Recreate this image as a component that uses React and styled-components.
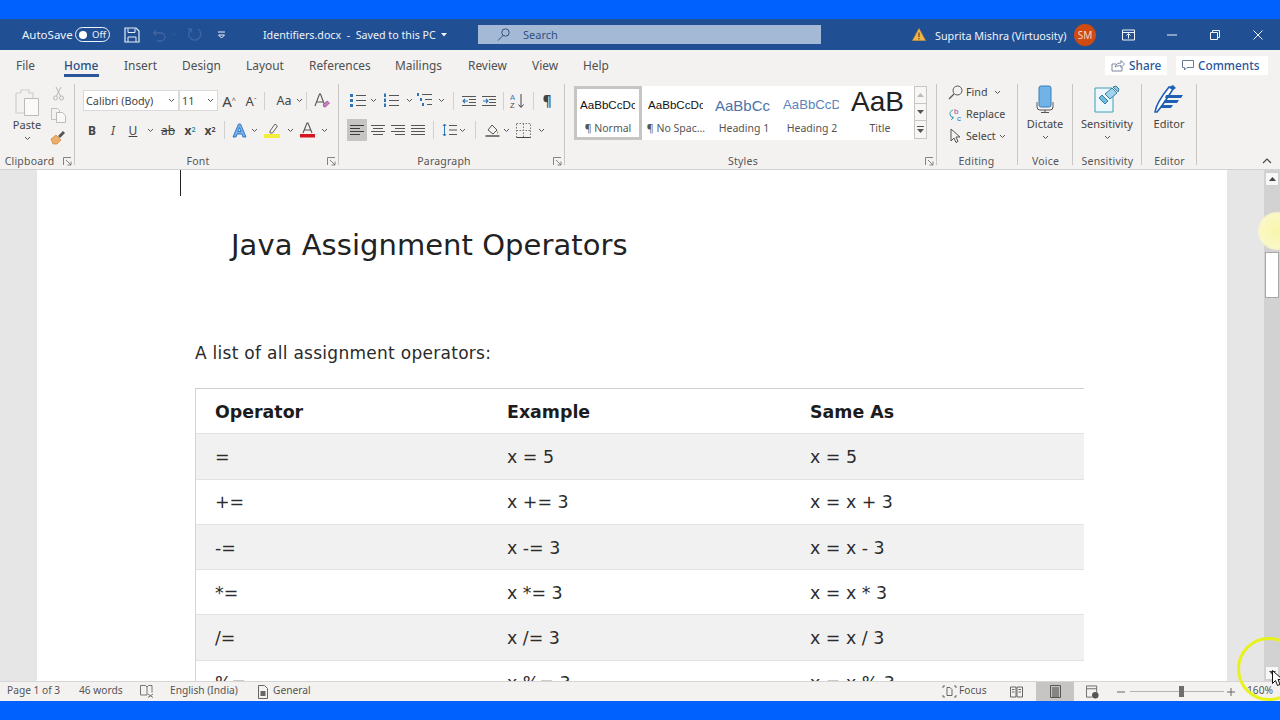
import React from "react";
import styled, { createGlobalStyle } from "styled-components";

const Global = createGlobalStyle`
  html, body { margin: 0; padding: 0; width: 1280px; height: 720px; overflow: hidden; background: #0061fe; }
  * { box-sizing: border-box; }
`;
const ui = `"Noto Sans", "Open Sans", "Liberation Sans", sans-serif`;
const doc = `"DejaVu Sans", "Liberation Sans", sans-serif`;

const Screen = styled.div`width:1280px;height:720px;display:flex;flex-direction:column;font-family:${ui};`;
const BlueBand = styled.div`height:19px;flex:none;background:#0061fe;`;
const Window = styled.div`height:682px;flex:none;position:relative;overflow:hidden;display:flex;flex-direction:column;background:#f3f2f1;`;

/* title bar */
const TitleBar = styled.header`height:31px;flex:none;background:#214f93;color:#eef3fa;display:flex;align-items:center;font-size:11.5px;`;
const Cell = styled.div`width:${p => p.$w}px;flex:none;display:flex;align-items:center;justify-content:${p => p.$left ? "flex-start" : "center"};white-space:nowrap;
  padding-left:${p => p.$pl || 0}px;margin-top:${p => p.$mt || 0}px;font-size:${p => p.$fs ? p.$fs + "px" : "inherit"};
  height:${p => p.$tall ? "100%" : "auto"};background:${p => p.$on ? "#c6c5c4" : "transparent"};`;
const Toggle = styled.div`width:35px;height:15px;border:1.3px solid #f1f5fb;border-radius:8px;display:flex;align-items:center;padding-left:3px;gap:5px;font-size:9.5px;line-height:1;`;
const Dot = styled.i`width:8px;height:8px;border-radius:50%;background:#fff;display:block;`;
const SearchBox = styled.div`width:343px;height:19px;margin-top:-1px;flex:none;background:#a4b9d6;color:#33507c;display:flex;align-items:center;padding-left:19px;gap:13px;font-size:11px;`;
const Avatar = styled.div`width:22px;height:22px;flex:none;border-radius:50%;background:#cf4b12;color:#f6d8c8;font-size:10px;display:flex;align-items:center;justify-content:center;`;

/* tabs */
const TabBar = styled.nav`height:32px;flex:none;display:flex;align-items:stretch;padding-left:16px;font-size:11.9px;color:#4a4a4a;`;
const Tab = styled.div`width:${p => p.$w}px;flex:none;position:relative;display:flex;align-items:center;padding-bottom:3px;
  color:${p => p.$on ? "#2b4f85" : "#4f4f4f"};font-weight:${p => p.$on ? 500 : 400};`;
const TabMark = styled.i`position:absolute;left:0;width:35px;top:24px;height:3px;background:#2b579a;display:block;`;
const Spring = styled.div`flex:1;`;
const TopAction = styled.div`height:19px;margin-top:6px;background:#fff;color:#2b579a;display:flex;align-items:center;gap:4px;font-size:11.8px;font-weight:500;
  width:${p => p.$w}px;padding-left:6px;padding-bottom:1px;margin-right:${p => p.$r}px;`;

/* ribbon */
const Ribbon = styled.div`height:88px;flex:none;display:flex;border-bottom:1px solid #d3d1cf;position:relative;`;
const Group = styled.section`width:${p => p.$w}px;flex:none;height:87px;position:relative;display:flex;flex-direction:column;
  &::after{content:"";position:absolute;right:0;top:2px;bottom:4px;width:1px;background:#c8c6c4;}`;
const GroupBody = styled.div`height:70px;flex:none;padding:${p => p.$pad || "0"};display:${p => p.$row ? "flex" : "block"};`;
const GroupLabel = styled.div`height:17px;line-height:17px;padding-top:1px;font-size:10.5px;letter-spacing:.2px;text-align:center;color:#555;padding-right:${p => p.$pr || 0}px;`;
const Launcher = styled.div`position:absolute;right:3px;bottom:3px;width:9px;height:9px;display:flex;`;
const RRow = styled.div`height:${p => p.$h}px;margin-top:${p => p.$mt || 0}px;display:flex;align-items:center;`;
const Slot = styled.div`width:${p => p.$w}px;height:100%;flex:none;display:flex;align-items:center;justify-content:center;color:${p => p.$c || "#444"};
  font-size:${p => p.$fs || 12}px;font-weight:${p => p.$b ? 700 : 400};font-style:${p => p.$i ? "italic" : "normal"};text-decoration:${p => p.$d || "none"};
  background:${p => p.$on ? "#c6c5c4" : "transparent"};`;
const Sep = styled.i`display:block;flex:none;width:1px;height:18px;background:#d2d0ce;margin-left:${p => p.$l}px;margin-right:${p => p.$r}px;`;
const Sub = styled.sub`font-size:7px;color:${p => p.$c || "#444"};line-height:0;`;
const Sup = styled.sup`font-size:7px;line-height:0;`;
const Combo = styled.div`width:${p => p.$w}px;height:21px;flex:none;background:#fff;border:1px solid #dcdad8;display:flex;align-items:center;justify-content:space-between;
  padding:0 3px 0 2px;font-size:10.8px;color:#444;`;
const PasteBlock = styled.div`width:44px;margin-left:5px;padding-top:5px;display:flex;flex-direction:column;align-items:center;font-size:11px;color:#444;line-height:15px;`;
const SmallCol = styled.div`width:18px;padding-top:4px;display:flex;flex-direction:column;align-items:center;gap:7px;`;
const Chev = styled.div`height:12px;display:flex;align-items:center;justify-content:center;`;
const BigBtn = styled.div`flex:1;padding:3px ${p => p.$pr || 0}px 0 0;display:flex;flex-direction:column;align-items:center;font-size:11px;color:#444;line-height:15px;`;
const IconBox = styled.div`height:28px;margin-bottom:3px;display:flex;align-items:center;`;
const Gallery = styled.div`margin:4px 0 0 9px;height:54px;width:353px;display:flex;background:#fff;`;
const StyleItem = styled.div`width:68px;flex:none;height:54px;overflow:hidden;display:flex;flex-direction:column;position:relative;
  ${p => p.$on ? "border:3px solid #c6c5c4;" : "border:3px solid transparent;"}`;
const Sample = styled.div`height:32px;width:58px;flex:none;white-space:nowrap;overflow:hidden;display:flex;align-items:center;padding-left:${p => p.$pl || 3}px;
  font-family:"Liberation Sans",sans-serif;font-size:${p => p.$fs}px;color:${p => p.$c};line-height:1;`;
const TitleSample = styled.div`height:22px;margin:3px 0 7px;flex:none;white-space:nowrap;overflow:hidden;padding-left:2px;
  font-family:"Liberation Sans",sans-serif;font-size:28px;color:#222;line-height:20px;`;
const StyleName = styled.div`text-align:center;font-size:10.5px;color:#555;white-space:nowrap;line-height:15px;`;
const GalleryBtns = styled.div`width:13px;flex:none;display:flex;flex-direction:column;background:#f3f2f1;`;
const GalleryBtn = styled.div`height:18px;border:1px solid #c8c6c4;margin-top:${p => p.$first ? 0 : "-1px"};display:flex;align-items:center;justify-content:center;background:#f7f6f5;
  &:last-child{height:19px;}`;
const EditRow = styled.div`height:22px;display:flex;align-items:center;padding-left:11px;gap:3px;font-size:10.7px;color:#444;margin-top:${p => p.$mt || 0}px;`;
const Collapse = styled.div`position:absolute;right:8px;bottom:3px;width:10px;height:8px;display:flex;`;

/* document */
const DocArea = styled.main`flex:1;min-height:0;display:flex;background:#e6e6e6;overflow:hidden;`;
const Gutter = styled.div`width:${p => p.$w}px;flex:none;`;
const Page = styled.article`width:1190px;flex:none;background:#fff;padding:0 0 0 158px;position:relative;color:#222;font-family:${doc};overflow:hidden;`;
const Caret = styled.i`position:absolute;left:143px;top:0;width:1px;height:26px;background:#222;display:block;`;
const Heading = styled.h1`margin:56px 0 0 36px;font-weight:400;font-size:29px;line-height:38px;letter-spacing:.05px;color:#222;`;
const Intro = styled.p`margin:78px 0 0;font-size:17px;line-height:22px;letter-spacing:.28px;color:#2a2a2a;`;
const Table = styled.div`margin-top:24px;width:889px;border-top:1px solid #cfcfcf;border-left:1px solid #d5d5d5;`;
const TRow = styled.div`height:45.3px;padding:1px 0 0 19px;display:grid;grid-template-columns:292px 303px 1fr;align-items:center;border-bottom:1px solid #e2e2e2;
  background:${p => p.$alt ? "#f1f1f1" : "#fff"};font-size:17.4px;font-weight:${p => p.$head ? 700 : 400};color:${p => p.$head ? "#1c1c1c" : "#2c2c2c"};white-space:pre;`;
const ScrollBar = styled.aside`width:16px;flex:none;background:#d2d2d2;padding:2px 1px 1px;display:flex;flex-direction:column;align-items:center;`;
const ScrollBtn = styled.div`width:14px;height:14px;flex:none;background:#f7f7f7;border:1px solid #cfcfcf;display:flex;align-items:center;justify-content:center;`;
const Thumb = styled.div`width:14px;height:46px;flex:none;margin-top:66px;background:#fff;border:1px solid #a8a8a8;`;

/* status bar */
const StatusBar = styled.footer`height:20px;flex:none;display:flex;align-items:center;background:#f3f2f1;border-top:1px solid #d8d6d4;font-size:10.2px;color:#555;`;
const StatusText = styled.span`margin-top:-3px;`;
const ZoomTrack = styled.div`width:94px;height:1px;background:#b5b3b1;position:relative;flex:none;`;
const ZoomThumb = styled.i`position:absolute;left:49px;top:-5px;width:5px;height:11px;background:#6e6e6e;display:block;`;

/* overlays */
const Glow = styled.div`position:absolute;left:1258px;top:193px;width:38px;height:38px;border-radius:50%;background:radial-gradient(circle,#f8f5ab 0%,#faf8c4 60%,rgba(250,240,215,.3) 100%);`;
const Ring = styled.div`position:absolute;left:1237px;top:618px;width:64px;height:64px;border-radius:50%;border:3px solid #e8f21a;`;
const Pointer = styled.svg`position:absolute;left:1272px;top:651px;`;

const S = ({ w, h, vb, children, ...r }) => (
  <svg width={w} height={h} viewBox={vb || `0 0 ${w} ${h}`} fill="none" {...r}>{children}</svg>
);
const Down = ({ c = "#555" }) => <S w={7} h={5}><path d="M1 1l2.5 2.5L6 1" stroke={c} strokeWidth="1" /></S>;
const Launch = () => <S w={9} h={9}><path d="M.5 8V.5H8M3 3l5 5M8 4.5V8H4.5" stroke="#777" strokeWidth=".9" /></S>;

const lines = (x, ys, w, c = "#555") => ys.map(y => <path key={y} d={`M${x} ${y}h${w}`} stroke={c} strokeWidth="1" />);
const Bullets = () => <S w={16} h={15}>{[2, 7, 12].map(y => <rect key={y} x="0" y={y - 1} width="3" height="3" fill="#2e75b6" />)}{lines(6, [2.5, 7.5, 12.5], 10)}</S>;
const Numbers = () => <S w={16} h={15}>{[2, 7, 12].map(y => <rect key={y} x="1" y={y - 1.5} width="2" height="3.5" fill="#2e75b6" />)}{lines(6, [2.5, 7.5, 12.5], 10)}</S>;
const Multi = () => <S w={16} h={15}><rect x="0" y="0" width="2" height="3" fill="#2e75b6" /><rect x="3" y="5" width="2" height="3" fill="#2e75b6" /><rect x="5" y="10" width="2" height="3" fill="#2e75b6" />{lines(5, [1.5], 10)}{lines(8, [6.5], 7)}{lines(10, [11.5], 5)}</S>;
const Indent = ({ flip }) => <S w={14} h={12}>{lines(0, [1.5, 10.5], 14)}{lines(7, [4.5, 7.5], 7)}<path d={flip ? "M1 6h5M4 4l2 2-2 2" : "M1 6h5M3 4L1 6l2 2"} stroke="#2e75b6" strokeWidth="1.1" /></S>;
const Align = ({ kind }) => {
  const rows = { left: [[0, 14], [0, 10], [0, 14], [0, 10]], center: [[0, 14], [2, 10], [0, 14], [2, 10]], right: [[0, 14], [4, 10], [0, 14], [4, 10]], just: [[0, 14], [0, 14], [0, 14], [0, 14]] }[kind];
  return <S w={14} h={12}>{rows.map(([x, w], i) => <path key={i} d={`M${x} ${1.5 + i * 3}h${w}`} stroke={kind === "left" ? "#3c3c3c" : "#555"} strokeWidth="1" />)}</S>;
};

export default function App() {
  return (
    <Screen>
      <Global />
      <BlueBand />
      <Window>
        <TitleBar>
          <Cell $w={75} $left $pl={22}>AutoSave</Cell>
          <Cell $w={47} $left><Toggle><Dot />Off</Toggle></Cell>
          <Cell $w={20}><S w={16} h={16}><path d="M1 1h11l3 3v11H1z" stroke="#e8eef8" strokeWidth="1.2" /><path d="M4 1.5v4h7v-4M4 15v-5h8v5" stroke="#e8eef8" strokeWidth="1" /></S></Cell>
          <Cell $w={30} $pl={6}><S w={16} h={14}><path d="M4 2L1.5 5 4.5 7.5M2 5h7a4 4 0 0 1 0 8H5" stroke="#4067a4" strokeWidth="1.3" /></S></Cell>
          <Cell $w={4}><Down c="#4067a4" /></Cell>
          <Cell $w={38}><S w={16} h={15}><path d="M11 2a6 6 0 1 1-6.5 0M4.5 2v3.5M4.5 2H1" stroke="#4067a4" strokeWidth="1.3" /></S></Cell>
          <Cell $w={14}><S w={9} h={8}><path d="M1 1h7M1.5 4l3 3 3-3z" stroke="#eef3fa" strokeWidth="1" /></S></Cell>
          <Cell $w={250} $left $pl={35} $fs={10.7}>Identifiers.docx&nbsp; -&nbsp; Saved to this PC &nbsp;<S w={6} h={4}><path d="M0 0h6L3 3.5z" fill="#eef3fa" /></S></Cell>
          <SearchBox><S w={13} h={13}><circle cx="8.5" cy="4.5" r="3.7" stroke="#33507c" /><path d="M6 7.5L1 12.5" stroke="#33507c" /></S>Search</SearchBox>
          <Cell $w={105} $left $pl={91}><S w={14} h={13}><path d="M7 .5l6.5 12H.5z" fill="#eeb64a" stroke="#d9962a" strokeWidth=".6" /><path d="M7 4.5v4.5M7 10v1.3" stroke="#7a4d12" strokeWidth="1.3" /></S></Cell>
          <Cell $w={148} $left $pl={9} $mt={2} $fs={10.8}>Suprita Mishra (Virtuosity)</Cell>
          <Avatar>SM</Avatar>
          <Cell $w={64}><S w={13} h={12}><path d="M.5 1h12v10H.5z M.5 3.5h12" stroke="#eef3fa" /><path d="M6.5 9.5V5M4.5 6.5l2-2 2 2" stroke="#eef3fa" /></S></Cell>
          <Cell $w={24}><S w={10} h={2}><path d="M0 1h10" stroke="#eef3fa" /></S></Cell>
          <Cell $w={62}><S w={10} h={10}><path d="M.5 2.5h7v7h-7zM2.5 2.5v-2h7v7h-2" stroke="#eef3fa" /></S></Cell>
          <Cell $w={24}><S w={10} h={10}><path d="M.5.5l9 9M9.5.5l-9 9" stroke="#eef3fa" /></S></Cell>
        </TitleBar>

        <TabBar>
          <Tab $w={48}>File</Tab>
          <Tab $w={60} $on>Home<TabMark /></Tab>
          <Tab $w={58}>Insert</Tab>
          <Tab $w={64}>Design</Tab>
          <Tab $w={63}>Layout</Tab>
          <Tab $w={86}>References</Tab>
          <Tab $w={73}>Mailings</Tab>
          <Tab $w={64}>Review</Tab>
          <Tab $w={51}>View</Tab>
          <Tab $w={40}>Help</Tab>
          <Spring />
          <TopAction $w={62} $r={9}><S w={14} h={13}><path d="M1 5h4M1 5v7h10V8M4 8c1-3 3-4 6-4V1.5L13.5 5 10 8.5V6.5C8 6.5 6 7 4 8z" stroke="#6c7c94" strokeWidth=".9" /></S>Share</TopAction>
          <TopAction $w={92} $r={12}><S w={12} h={11}><path d="M.5.5h11v7H5L2.5 10V7.5h-2z" stroke="#6c7c94" /></S>Comments</TopAction>
        </TabBar>

        <Ribbon>
          <Group $w={75}>
            <GroupBody $row>
              <PasteBlock>
                <S w={26} h={30}><path d="M2 6h5V3h8v3h4v5" stroke="#cfcdcb" strokeWidth="1.2" /><path d="M2 6v20h8" stroke="#cfcdcb" strokeWidth="1.2" /><path d="M10.5 11.5h14v17h-14z" fill="#fafafa" stroke="#bdbbb9" /></S>
                Paste
                <Chev><Down /></Chev>
              </PasteBlock>
              <SmallCol>
                <S w={11} h={15}><path d="M3 1l4.5 9M8 1L3.5 10" stroke="#b8b6b4" /><circle cx="2.5" cy="12" r="2" stroke="#b8b6b4" /><circle cx="8.5" cy="12" r="2" stroke="#b8b6b4" /></S>
                <S w={15} h={15}><path d="M.5.5h6l2 2v9H.5z" stroke="#c4c2c0" /><path d="M5.5 4.5h6l3 3v7h-9z" fill="#f8f8f8" stroke="#bbb" /></S>
                <S w={16} h={15}><path d="M1 9l5-4 5 5-4 4H3z" fill="#eeae6b" stroke="#cf8430" strokeWidth=".7" /><path d="M8 6l5-5 2 2-5 5z" fill="#555" /></S>
              </SmallCol>
            </GroupBody>
            <GroupLabel $pr={16}>Clipboard</GroupLabel>
            <Launcher><Launch /></Launcher>
          </Group>

          <Group $w={264}>
            <GroupBody $pad="8px 0 0 8px">
              <RRow $h={21}>
                <Combo $w={96}>Calibri (Body)<Down /></Combo>
                <Combo $w={39}>11<Down /></Combo>
                <Slot $w={22} $fs={15}>A<Sup>^</Sup></Slot>
                <Slot $w={22} $fs={13}>A<Sup>ˇ</Sup></Slot>
                <Sep $l={2} $r={7} />
                <Slot $w={24} $fs={12.5}>Aa</Slot>
                <Cell $w={7}><Down /></Cell>
                <Sep $l={3} $r={7} />
                <Slot $w={16}><S w={16} h={16}><path d="M1 13L5.5 1h1L11 13M3 9h6" stroke="#555" strokeWidth="1.1" /><path d="M9 12l4-4 2.5 2-4 4H10z" fill="#c77bc0" stroke="#8f4b8c" strokeWidth=".7" /></S></Slot>
              </RRow>
              <RRow $h={22} $mt={8}>
                <Slot $w={18} $b>B</Slot>
                <Slot $w={24} $i>I</Slot>
                <Slot $w={16} $d="underline">U</Slot>
                <Slot $w={18}><Down /></Slot>
                <Slot $w={18} $d="line-through">ab</Slot>
                <Slot $w={26} $b>x<Sub $c="#2e9bb6">2</Sub></Slot>
                <Slot $w={14} $b>x<Sup>2</Sup></Slot>
                <Sep $l={7} $r={3} />
                <Slot $w={22}><S w={15} h={15}><path d="M1 14L6.5 1h2L14 14h-3l-1-3H5l-1 3zM6 8.5h3L7.5 4.5z" fill="#7db2e6" stroke="#2272c3" strokeWidth=".9" /></S></Slot>
                <Slot $w={8}><Down /></Slot>
                <Slot $w={28}><S w={16} h={16}><path d="M6 9l5-7 2.5 2-5 7H6z" stroke="#666" /><rect y="12" width="16" height="4" fill="#f4ee3b" /></S></Slot>
                <Slot $w={8}><Down /></Slot>
                <Slot $w={26}><S w={15} h={16}><path d="M3 11L7 1h1l4 10M4.5 8h6" stroke="#555" strokeWidth="1.1" /><rect y="12" width="15" height="3.5" fill="#d5161f" /></S></Slot>
                <Slot $w={8}><Down /></Slot>
              </RRow>
            </GroupBody>
            <GroupLabel $pr={18}>Font</GroupLabel>
            <Launcher><Launch /></Launcher>
          </Group>

          <Group $w={226}>
            <GroupBody $pad="8px 0 0 8px">
              <RRow $h={21}>
                <Slot $w={22}><Bullets /></Slot><Slot $w={8}><Down /></Slot>
                <Slot $w={28}><Numbers /></Slot><Slot $w={8}><Down /></Slot>
                <Slot $w={24}><Multi /></Slot><Slot $w={8}><Down /></Slot>
                <Sep $l={8} $r={5} />
                <Slot $w={19}><Indent /></Slot><Slot $w={22}><Indent flip /></Slot>
                <Sep $l={3} $r={4} />
                <Slot $w={20}><S w={16} h={16}><text x="0" y="7" fontSize="7.5" fill="#2e75b6" fontFamily="Liberation Sans">A</text><text x="0" y="15" fontSize="7.5" fill="#444" fontFamily="Liberation Sans">Z</text><path d="M11 1v13M8.5 11.5L11 14.5l2.5-3" stroke="#444" /></S></Slot>
                <Sep $l={5} $r={6} />
                <Slot $w={14} $b $fs={13.5}>¶</Slot>
              </RRow>
              <RRow $h={22} $mt={8}>
                <Slot $w={20} $on><Align kind="left" /></Slot>
                <Slot $w={21}><Align kind="center" /></Slot>
                <Slot $w={20}><Align kind="right" /></Slot>
                <Slot $w={20}><Align kind="just" /></Slot>
                <Sep $l={5} $r={7} />
                <Slot $w={17}><S w={15} h={14}><path d="M2.5 1v12M.8 3L2.5 1 4.2 3M.8 11l1.7 2 1.7-2" stroke="#2e75b6" />{lines(7, [2.5, 7, 11.5], 8)}</S></Slot>
                <Slot $w={8}><Down /></Slot>
                <Sep $l={9} $r={7} />
                <Slot $w={19}><S w={15} h={15}><path d="M3 7l4-5 5 5-4 4z" stroke="#555" /><path d="M12 8c1 1.5 1 2.5 0 3" stroke="#d4a017" /><path d="M.5 13h14" stroke="#555" strokeWidth="1.5" /></S></Slot>
                <Slot $w={8}><Down /></Slot>
                <Slot $w={27}><S w={15} h={15}><path d="M.5.5h14v14H.5zM7.5.5v14M.5 7.5h14" stroke="#777" strokeDasharray="1.5 1.5" /><path d="M.5 14.5h14" stroke="#444" /></S></Slot>
                <Slot $w={8}><Down /></Slot>
              </RRow>
            </GroupBody>
            <GroupLabel $pr={16}>Paragraph</GroupLabel>
            <Launcher><Launch /></Launcher>
          </Group>

          <Group $w={372}>
            <GroupBody>
              <Gallery>
                <StyleItem $on><Sample $fs={11.6} $c="#111">AaBbCcDc</Sample><StyleName>¶ Normal</StyleName></StyleItem>
                <StyleItem><Sample $fs={11.6} $c="#111">AaBbCcDc</Sample><StyleName>¶ No Spac...</StyleName></StyleItem>
                <StyleItem><Sample $fs={15} $c="#4a74a8" $pl={2}>AaBbCc</Sample><StyleName>Heading 1</StyleName></StyleItem>
                <StyleItem><Sample $fs={13.2} $c="#5a83b8" $pl={2}>AaBbCcD</Sample><StyleName>Heading 2</StyleName></StyleItem>
                <StyleItem><TitleSample>AaB</TitleSample><StyleName>Title</StyleName></StyleItem>
                <GalleryBtns>
                  <GalleryBtn $first><S w={7} h={4}><path d="M3.5 0L7 4H0z" fill="#bbb" /></S></GalleryBtn>
                  <GalleryBtn><S w={7} h={4}><path d="M3.5 4L7 0H0z" fill="#555" /></S></GalleryBtn>
                  <GalleryBtn><S w={7} h={7}><path d="M0 .5h7" stroke="#555" /><path d="M3.5 7L7 3H0z" fill="#555" /></S></GalleryBtn>
                </GalleryBtns>
              </Gallery>
            </GroupBody>
            <GroupLabel $pr={16}>Styles</GroupLabel>
            <Launcher><Launch /></Launcher>
          </Group>

          <Group $w={81}>
            <GroupBody>
              <EditRow $mt={-1}><S w={15} h={15}><circle cx="9.5" cy="5.5" r="4.5" stroke="#555" /><path d="M6 9l-5 5" stroke="#555" strokeWidth="1.3" /></S>Find<span style={{ width: 1 }} /><Down /></EditRow>
              <EditRow><S w={15} h={15}><text x="6" y="7" fontSize="8" fill="#a348a0" fontFamily="Liberation Sans">b</text><text x="9" y="14" fontSize="8" fill="#2e75b6" fontFamily="Liberation Sans">c</text><path d="M5 3C1 4 1 9 5 11M3.5 9L5.5 11 3 12.5" stroke="#2e9bb6" /></S>Replace</EditRow>
              <EditRow><S w={15} h={16}><path d="M3 1v12l3-3 2 4.5 2-1-2-4.5h4z" stroke="#555" /></S>Select<Down /></EditRow>
            </GroupBody>
            <GroupLabel $pr={2}>Editing</GroupLabel>
          </Group>

          <Group $w={55}>
            <GroupBody $row>
              <BigBtn $pr={1}>
                <IconBox><S w={18} h={28}><rect x="3" y="1" width="12" height="21" rx="2" fill="#71b2e8" stroke="#3b7fb8" /><path d="M1 17v5a3 3 0 0 0 3 3h10a3 3 0 0 0 3-3v-5M9 25v3M5 27.5h8" stroke="#555" /></S></IconBox>
                Dictate
                <Chev><Down /></Chev>
              </BigBtn>
            </GroupBody>
            <GroupLabel>Voice</GroupLabel>
          </Group>

          <Group $w={69}>
            <GroupBody $row>
              <BigBtn $pr={1}>
                <IconBox><S w={26} h={28}><path d="M1 3h17l1 3v21H1z" fill="#eef7fb" stroke="#3aa0b8" /><path d="M5 13l6 6 3-3-6-6z" fill="#6fbde0" stroke="#3a7fa0" /><path d="M11 9l7-6 5 5-7 6z" fill="#9ed3ee" stroke="#3a7fa0" /><path d="M19 2l3-1 3 3-1 3z" fill="#8cc6e8" stroke="#3a7fa0" /></S></IconBox>
                Sensitivity
                <Chev><Down /></Chev>
              </BigBtn>
            </GroupBody>
            <GroupLabel>Sensitivity</GroupLabel>
          </Group>

          <Group $w={55}>
            <GroupBody $row>
              <BigBtn $pr={1}>
                <IconBox><S w={30} h={28}><path d="M1 27c1-7 6-15 14-25l4 2C14 12 9 20 3 27z" fill="#fff" stroke="#2060b4" strokeWidth="1.6" /><path d="M15 2l4-2 3 3-3 2zM12 10h17l-2 3H11zM11 15h14l-2 3H9zM8 20h11l-2 3H6z" fill="#2060b4" /></S></IconBox>
                Editor
              </BigBtn>
            </GroupBody>
            <GroupLabel>Editor</GroupLabel>
          </Group>
          <Collapse><S w={10} h={6}><path d="M1 5l4-4 4 4" stroke="#444" strokeWidth="1.1" /></S></Collapse>
        </Ribbon>

        <DocArea>
          <Gutter $w={37} />
          <Page>
            <Caret />
            <Heading>Java Assignment Operators</Heading>
            <Intro>A list of all assignment operators:</Intro>
            <Table>
              <TRow $head><span>Operator</span><span>Example</span><span>Same As</span></TRow>
              <TRow $alt><span>=</span><span>x = 5</span><span>x = 5</span></TRow>
              <TRow><span>+=</span><span>x += 3</span><span>x = x + 3</span></TRow>
              <TRow $alt><span>-=</span><span>x -= 3</span><span>x = x - 3</span></TRow>
              <TRow><span>*=</span><span>x *= 3</span><span>x = x * 3</span></TRow>
              <TRow $alt><span>/=</span><span>x /= 3</span><span>x = x / 3</span></TRow>
              <TRow><span>%=</span><span>x %= 3</span><span>x = x % 3</span></TRow>
            </Table>
          </Page>
          <Gutter $w={37} />
          <ScrollBar>
            <ScrollBtn><S w={7} h={4}><path d="M3.5 0L7 4H0z" fill="#444" /></S></ScrollBtn>
            <Thumb />
            <Spring />
            <ScrollBtn><S w={7} h={4}><path d="M3.5 4L7 0H0z" fill="#444" /></S></ScrollBtn>
          </ScrollBar>
        </DocArea>

        <StatusBar>
          <Cell $w={79} $left $pl={7}><StatusText>Page 1 of 3</StatusText></Cell>
          <Cell $w={61} $left><StatusText>46 words</StatusText></Cell>
          <Cell $w={30} $left><S w={14} h={13}><path d="M.5.5h5l1.5 1.5L8.5.5h3.5v7M7 2v8H.5V.5M8 9l5 3.5M13 9l-5 3.5" stroke="#666" strokeWidth=".9" /></S></Cell>
          <Cell $w={88} $left><StatusText>English (India)</StatusText></Cell>
          <Cell $w={15} $left><S w={10} h={14}><path d="M.5.5h6l3 3v10H.5z" stroke="#666" /><rect x="2.5" y="6" width="5" height="5" fill="#666" /></S></Cell>
          <Cell $w={60} $left><StatusText>General</StatusText></Cell>
          <Spring />
          <Cell $w={17} $left><S w={15} h={13}><path d="M1 3V1h2M12 1h2v2M14 10v2h-2M3 12H1v-2" stroke="#666" /><path d="M5 2.5h3l2 2v6H5z" stroke="#666" /></S></Cell>
          <Cell $w={51} $left><StatusText>Focus</StatusText></Cell>
          <Cell $w={13}><S w={13} h={12}><path d="M.5 1h5.5v10H.5zM7 1h5.5v10H7zM2 3.5h2.5M2 6h2.5M8.5 3.5H11M8.5 6H11" stroke="#666" /></S></Cell>
          <Cell $w={13} />
          <Cell $w={38} $tall $on><S w={11} h={13}><path d="M.5.5h10v12H.5z" stroke="#555" />{lines(2, [3, 5, 7, 9, 11], 7, "#444")}</S></Cell>
          <Cell $w={12} />
          <Cell $w={13}><S w={14} h={14}><path d="M.5.5h11v7M.5.5v12h6M.5 3.5h11" stroke="#666" /><circle cx="10" cy="10.5" r="3.5" fill="#555" /></S></Cell>
          <Cell $w={18} />
          <Cell $w={8}><S w={8} h={2}><path d="M0 1h8" stroke="#666" /></S></Cell>
          <Cell $w={5} />
          <ZoomTrack><ZoomThumb /></ZoomTrack>
          <Cell $w={14}><S w={8} h={8}><path d="M0 4h8M4 0v8" stroke="#666" /></S></Cell>
          <Cell $w={9} />
          <Cell $w={33} $left><StatusText>160%</StatusText></Cell>
        </StatusBar>

        <Glow />
        <Ring />
        <Pointer width="11" height="17" viewBox="0 0 11 17"><path d="M.5.5v13l3-3 2 5 2.5-1-2-5h4.5z" fill="#fff" stroke="#111" /></Pointer>
      </Window>
      <BlueBand />
    </Screen>
  );
}
